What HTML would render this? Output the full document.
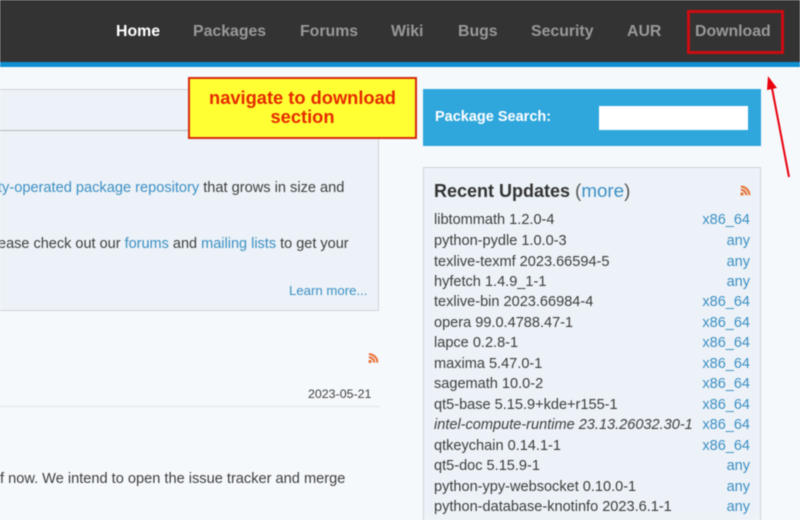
<!DOCTYPE html>
<html><head><meta charset="utf-8"><style>
html,body{margin:0;padding:0}
body{width:800px;height:520px;overflow:hidden;background:#f6f9fc;position:relative;font-family:"Liberation Sans",sans-serif;color:#333}
#w{position:absolute;left:0;top:0;width:800px;height:520px;overflow:hidden;filter:blur(.45px)}
.a{position:absolute;white-space:nowrap}
.n{font-weight:bold;font-size:15.85px;line-height:20px;top:22px;color:#999}
.t{font-size:14.6px;line-height:18px;color:#3d3d3d}
.b{color:#3c8fc4}
.r{left:0;width:800px;height:18px}
.r .p{position:absolute;left:434px;font-size:14.55px;line-height:18px;color:#3d3d3d}
.r .q{position:absolute;right:50px;font-size:14.5px;line-height:18px;color:#3c8fc4}
</style></head><body><div id="w">
<div class="a" style="left:0;top:0;width:800px;height:62px;background:#333"></div>
<div class="a" style="left:0;top:62px;width:800px;height:5px;background:#0f8fd0"></div>
<span class="a n" style="left:116px;color:#fff">Home</span>
<span class="a n" style="left:193px">Packages</span>
<span class="a n" style="left:300px">Forums</span>
<span class="a n" style="left:391px">Wiki</span>
<span class="a n" style="left:458px">Bugs</span>
<span class="a n" style="left:531px">Security</span>
<span class="a n" style="left:627px">AUR</span>
<span class="a n" style="left:695px">Download</span>
<div class="a" style="left:687px;top:10px;width:91px;height:38px;border:3px solid #cc0c10"></div>

<div class="a" style="left:0;top:89px;width:378px;height:220px;background:#ecf2f7;border:1px solid #d0d5da;border-left:0"></div>
<div class="a" style="left:0;top:130px;width:379px;height:1px;background:#b5b9bd"></div>
<span class="a t" style="left:-2px;top:179px"><span class="b">ty-operated package repository</span> that grows in size and</span>
<span class="a t" style="left:-2px;top:235px;font-size:14.5px">ease check out our <span class="b">forums</span> and <span class="b">mailing lists</span> to get your</span>
<span class="a b" style="left:289px;top:282px;font-size:13.2px;line-height:18px">Learn more...</span>

<div class="a" style="left:188px;top:77px;width:225px;height:58px;background:#ffff33;border:2px solid #d62a10"></div>
<div class="a" style="left:190px;top:88px;width:225px;text-align:center;font-weight:bold;font-size:18.3px;line-height:19px;color:#e62a00">navigate to download<br>section</div>

<svg class="a" style="left:368px;top:352px" width="11" height="12" viewBox="0 0 12 12"><circle cx="2.2" cy="9.8" r="1.8" fill="#e8743b"/><path d="M1 5.2A5.8 5.8 0 0 1 6.8 11M1 1.800A9.2 9.2 0 0 1 10.2 11" fill="none" stroke="#e8743b" stroke-width="2.300"/></svg>
<span class="a t" style="left:308px;top:385px;font-size:12.4px">2023-05-21</span>
<div class="a" style="left:0;top:406px;width:379px;border-top:1px dotted #ccd0d4"></div>
<span class="a t" style="left:0;top:470px">f now. We intend to open the issue tracker and merge</span>

<div class="a" style="left:423px;top:89px;width:338px;height:57px;background:#2fa6dc"></div>
<span class="a" style="left:435px;top:108px;font-weight:bold;font-size:14.5px;line-height:18px;color:#fff">Package Search:</span>
<div class="a" style="left:599px;top:106px;width:149px;height:24px;background:#fff"></div>

<div class="a" style="left:423px;top:167px;width:336px;height:360px;background:#ecf2f7;border:1px solid #d0d5da"></div>
<span class="a" style="left:434px;top:180px;font-size:18px;line-height:22px;font-weight:bold;color:#333">Recent Updates <span style="font-weight:normal;font-size:18.800px;color:#555">(<span class="b">more</span>)</span></span>
<svg class="a" style="left:740px;top:185px" width="11" height="11" viewBox="0 0 12 12"><circle cx="2.2" cy="9.8" r="1.8" fill="#e8743b"/><path d="M1 5.2A5.8 5.8 0 0 1 6.8 11M1 1.800A9.2 9.2 0 0 1 10.2 11" fill="none" stroke="#e8743b" stroke-width="2.300"/></svg>

<div class="a r" style="top:211px"><span class="p">libtommath 1.2.0-4</span><span class="q">x86_64</span></div>
<div class="a r" style="top:232px"><span class="p">python-pydle 1.0.0-3</span><span class="q">any</span></div>
<div class="a r" style="top:253px"><span class="p">texlive-texmf 2023.66594-5</span><span class="q">any</span></div>
<div class="a r" style="top:273px"><span class="p">hyfetch 1.4.9_1-1</span><span class="q">any</span></div>
<div class="a r" style="top:293px"><span class="p">texlive-bin 2023.66984-4</span><span class="q">x86_64</span></div>
<div class="a r" style="top:314px"><span class="p">opera 99.0.4788.47-1</span><span class="q">x86_64</span></div>
<div class="a r" style="top:334px"><span class="p">lapce 0.2.8-1</span><span class="q">x86_64</span></div>
<div class="a r" style="top:355px"><span class="p">maxima 5.47.0-1</span><span class="q">x86_64</span></div>
<div class="a r" style="top:375px"><span class="p">sagemath 10.0-2</span><span class="q">x86_64</span></div>
<div class="a r" style="top:396px"><span class="p">qt5-base 5.15.9+kde+r155-1</span><span class="q">x86_64</span></div>
<div class="a r" style="top:416px"><span class="p" style="font-style:italic">intel-compute-runtime 23.13.26032.30-1</span><span class="q">x86_64</span></div>
<div class="a r" style="top:437px"><span class="p">qtkeychain 0.14.1-1</span><span class="q">x86_64</span></div>
<div class="a r" style="top:457px"><span class="p">qt5-doc 5.15.9-1</span><span class="q">any</span></div>
<div class="a r" style="top:478px"><span class="p">python-ypy-websocket 0.10.0-1</span><span class="q">any</span></div>
<div class="a r" style="top:498px"><span class="p">python-database-knotinfo 2023.6.1-1</span><span class="q">any</span></div>

<svg class="a" style="left:760px;top:70px" width="40" height="112" viewBox="0 0 40 112"><path d="M8 6L7 20L17 18Z" fill="#e8000d"/><path d="M12 18L29 107" stroke="#e8000d" stroke-width="2" fill="none"/></svg>
</div></body></html>
